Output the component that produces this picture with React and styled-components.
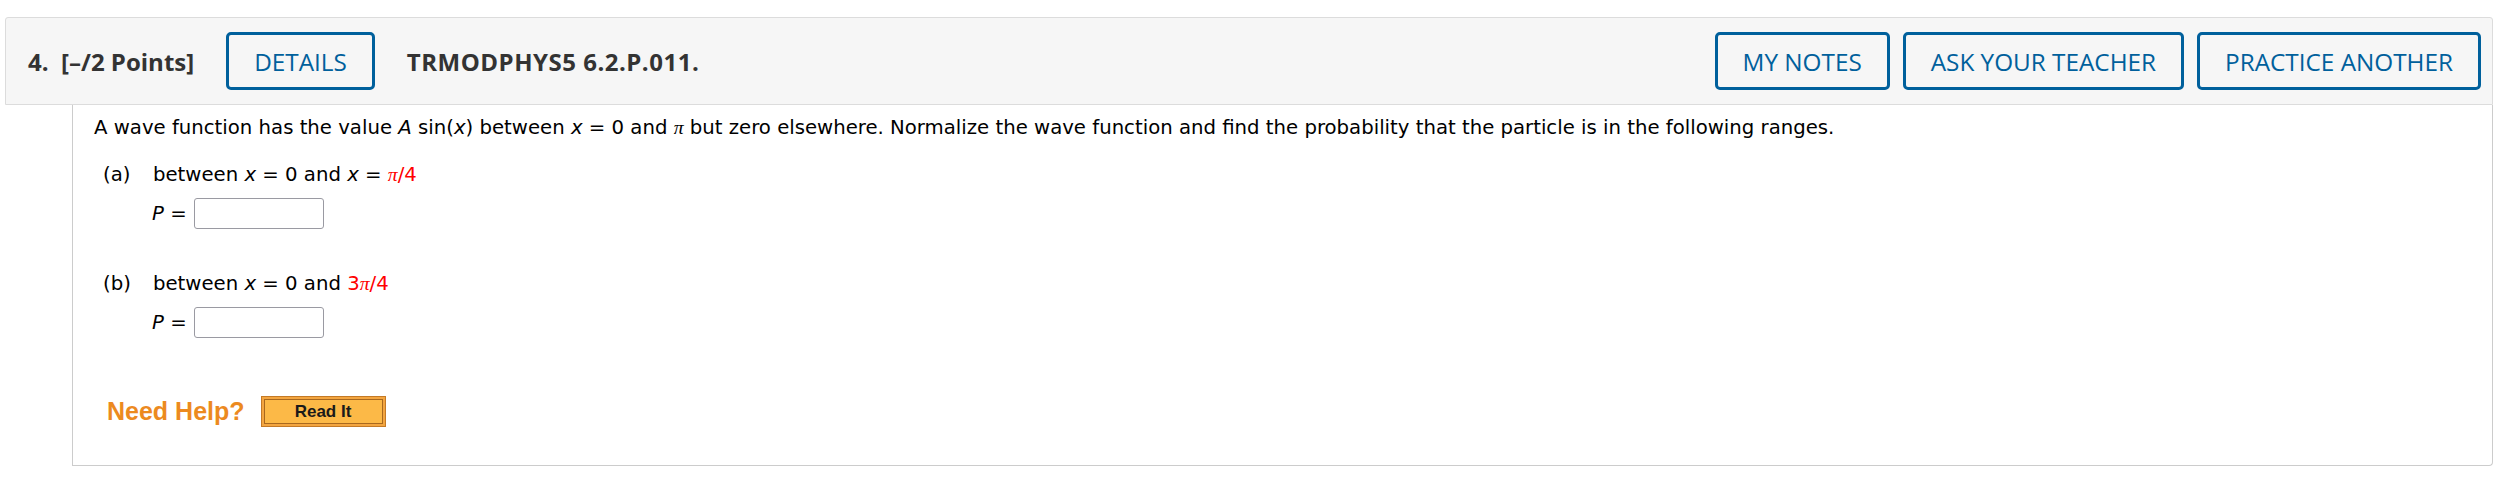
import styled, { createGlobalStyle } from "styled-components";

const GlobalStyle = createGlobalStyle`
  body {
    margin: 0;
    background: #ffffff;
  }
`;

const Page = styled.div`
  padding: 17px 1px 0 5px;
`;

const Header = styled.div`
  display: flex;
  align-items: center;
  justify-content: space-between;
  background-color: #f6f6f6;
  border: 1px solid #dcdcdc;
  border-radius: 3px 3px 0 0;
  padding: 14px 11px 14px 22px;
  font-family: "Open Sans", sans-serif;
`;

const HeaderGroup = styled.div`
  display: flex;
  align-items: center;
  gap: ${(props) => props.gap || 13}px;
`;

const HeaderLabel = styled.span`
  font-size: 24px;
  font-weight: 700;
  color: #333333;
  white-space: pre;
  letter-spacing: ${(props) => (props.wide ? "0.5px" : "0")};
`;

const OutlineButton = styled.button`
  box-sizing: border-box;
  height: 58px;
  padding: 0 25px;
  border: 3px solid #00609c;
  border-radius: 5px;
  background: transparent;
  color: #00609c;
  font-family: "Open Sans", sans-serif;
  font-size: 24.3px;
  font-weight: 400;
  white-space: nowrap;
`;

const Body = styled.div`
  margin-left: 67px;
  border: 1px solid #cccccc;
  border-top: none;
  border-radius: 0 0 4px 0;
  padding: 10px 21px 38px 21px;
  font-family: "DejaVu Sans", Verdana, sans-serif;
  font-size: 19.7px;
  line-height: 25px;
  color: #000000;
`;

const Prompt = styled.p`
  margin: 0;
`;

const Part = styled.div`
  margin-top: ${(props) => props.top}px;
  padding-left: 9px;
`;

const PartLine = styled.div`
  display: flex;
  gap: 16px;
`;

const PartTag = styled.span`
  width: 34px;
`;

const AnswerRow = styled.div`
  display: flex;
  align-items: center;
  gap: 7px;
  margin-top: 11px;
  padding-left: 49px;
  height: 31px;
`;

const AnswerBox = styled.input`
  box-sizing: border-box;
  width: 130px;
  height: 31px;
  border: 1px solid #9a9aa2;
  border-radius: 3px;
  background: #ffffff;
  margin: 0;
`;

const Var = styled.i`
  font-style: italic;
`;

const Pi = styled.span`
  font-family: "Liberation Serif", "DejaVu Serif", serif;
  font-style: italic;
`;

const Red = styled.span`
  color: #ff0000;
`;

const HelpRow = styled.div`
  display: flex;
  align-items: center;
  gap: 16px;
  margin-top: 58px;
  padding-left: 13px;
`;

const HelpText = styled.span`
  font-family: "Liberation Sans", Arial, sans-serif;
  font-size: 25px;
  font-weight: 700;
  color: #ec8a1f;
`;

const ReadButton = styled.button`
  box-sizing: border-box;
  width: 125px;
  height: 31px;
  padding: 2px;
  border: 1px solid #c47a26;
  background: #f3a540;
  display: flex;
`;

const ReadFace = styled.span`
  flex: 1;
  display: flex;
  align-items: center;
  justify-content: center;
  border: 1px solid #a8681e;
  background: #fcb947;
  font-family: "Liberation Sans", Arial, sans-serif;
  font-size: 17px;
  font-weight: 700;
  color: #1a1a1a;
`;

const App = () => {
  return (
    <Page>
      <GlobalStyle />
      <Header>
        <HeaderGroup gap={32}>
          <HeaderLabel>{"4.  [–/2 Points]"}</HeaderLabel>
          <OutlineButton>DETAILS</OutlineButton>
          <HeaderLabel wide>TRMODPHYS5 6.2.P.011.</HeaderLabel>
        </HeaderGroup>
        <HeaderGroup>
          <OutlineButton>MY NOTES</OutlineButton>
          <OutlineButton>ASK YOUR TEACHER</OutlineButton>
          <OutlineButton>PRACTICE ANOTHER</OutlineButton>
        </HeaderGroup>
      </Header>
      <Body>
        <Prompt>
          A wave function has the value <Var>A</Var> sin(<Var>x</Var>) between{" "}
          <Var>x</Var> = 0 and <Pi>π</Pi> but zero elsewhere. Normalize the wave
          function and find the probability that the particle is in the following
          ranges.
        </Prompt>
        <Part top={22}>
          <PartLine>
            <PartTag>(a)</PartTag>
            <span>
              between <Var>x</Var> = 0 and <Var>x</Var> ={" "}
              <Red>
                <Pi>π</Pi>/4
              </Red>
            </span>
          </PartLine>
          <AnswerRow>
            <span>
              <Var>P</Var> =
            </span>
            <AnswerBox type="text" />
          </AnswerRow>
        </Part>
        <Part top={42}>
          <PartLine>
            <PartTag>(b)</PartTag>
            <span>
              between <Var>x</Var> = 0 and{" "}
              <Red>
                3<Pi>π</Pi>/4
              </Red>
            </span>
          </PartLine>
          <AnswerRow>
            <span>
              <Var>P</Var> =
            </span>
            <AnswerBox type="text" />
          </AnswerRow>
        </Part>
        <HelpRow>
          <HelpText>Need Help?</HelpText>
          <ReadButton>
            <ReadFace>Read It</ReadFace>
          </ReadButton>
        </HelpRow>
      </Body>
    </Page>
  );
};

export default App;
